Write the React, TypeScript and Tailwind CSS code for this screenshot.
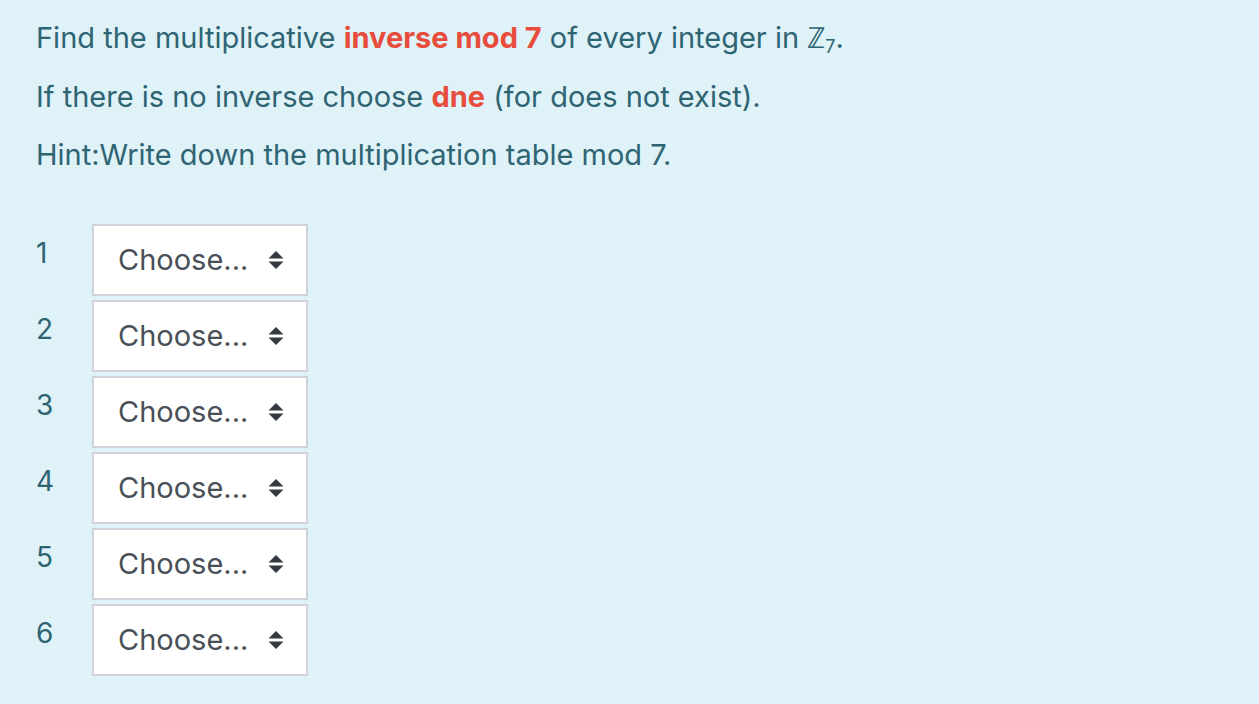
import React from 'react'

const rows = [1, 2, 3, 4, 5, 6]

function SortArrows() {
  return (
    <svg width="16" height="20" viewBox="0 0 16 20" className="text-[#343a40]">
      <path d="M8 1 L15.5 8.5 H0.5 Z" fill="currentColor" />
      <path d="M8 19 L15.5 11.5 H0.5 Z" fill="currentColor" />
    </svg>
  )
}

export default function App() {
  return (
    <div
      className="w-[1259px] h-[704px] bg-[#def2f8] text-[#2f6473] overflow-hidden"
      style={{ fontFamily: 'Inter, "Liberation Sans", sans-serif' }}
    >
      <div className="pl-[36px] pt-[19px] text-[29px] leading-[38px]">
        <p className="mb-[20.5px]">
          Find the multiplicative <b className="font-bold text-[#e74c3c]">inverse mod 7</b> of every integer in{' '}
          <span style={{ fontFamily: '"DejaVu Sans", sans-serif' }} className="font-light">ℤ</span>
          <sub className="text-[18px]">7</sub>.
        </p>
        <p className="mb-[20.5px]">
          If there is no inverse choose <b className="font-bold text-[#e74c3c]">dne</b> (for does not exist).
        </p>
        <p>Hint:Write down the multiplication table mod 7.</p>
      </div>

      <div className="pl-[36px] pt-[50px] flex flex-col gap-[4px]">
        {rows.map((n) => (
          <div key={n} className="flex items-start">
            <div className="w-[56px] pt-[12px] text-[28px] leading-[34px]">{n}</div>
            <div className="w-[216px] h-[72px] bg-white border-2 border-[#ced4da] flex items-center pl-[24px] pr-[22px] justify-between text-[#495057] text-[29px]">
              <span>Choose...</span>
              <SortArrows />
            </div>
          </div>
        ))}
      </div>
    </div>
  )
}
